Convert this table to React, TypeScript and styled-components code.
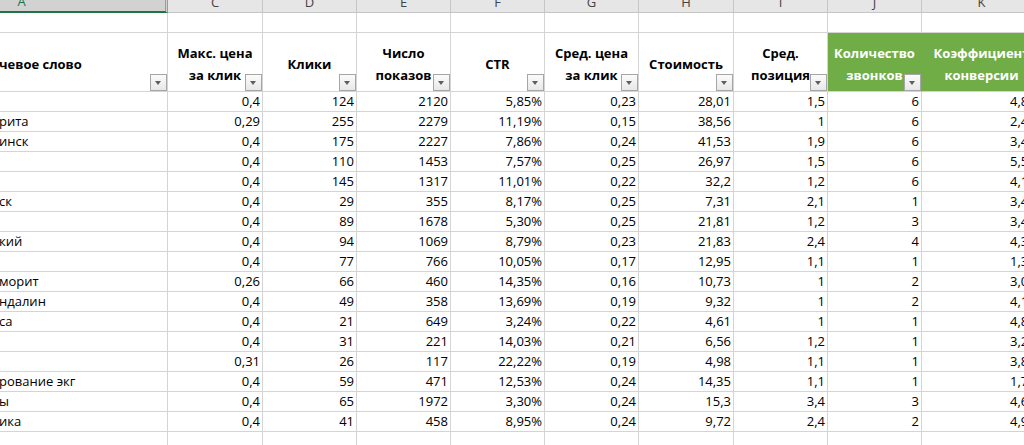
import React from 'react';
import styled, { createGlobalStyle } from 'styled-components';

const GRID = '#d4d4d4';
const GREEN = '#70ad47';

const GlobalStyle = createGlobalStyle`
  html, body { margin: 0; padding: 0; background: #fff; overflow: hidden; }
  body { font-family: 'Open Sans', 'Noto Sans', sans-serif; }
`;

const Viewport = styled.div`
  width: 1024px;
  height: 445px;
  overflow: hidden;
  background: #fff;
`;

const Sheet = styled.div`
  display: grid;
  grid-template-columns: 290px 95px 94px 94px 94px 94px 95px 94px 94px 120px;
  grid-template-rows: 21px 20px 59px;
  grid-auto-rows: 20px;
  width: max-content;
  margin-left: -122px;
  margin-top: -8px;
  font-family: 'Open Sans', 'Noto Sans', sans-serif;
  font-size: 13px;
  color: #000;
`;

const ColHead = styled.div<{ $selected?: boolean }>`
  box-sizing: border-box;
  display: flex;
  align-items: center;
  justify-content: center;
  padding-bottom: 1px;
  background: ${(p) => (p.$selected ? '#d2d2d2' : '#e6e6e6')};
  border-right: ${(p) => (p.$selected ? '3px double #9a9a9a' : '1px solid #c6c6c6')};
  border-bottom: ${(p) => (p.$selected ? '2px solid #217346' : '1px solid #c6c6c6')};
  color: ${(p) => (p.$selected ? '#217346' : '#444')};
  font-size: 13px;
`;

const Cell = styled.div<{ $align?: 'left' | 'right' }>`
  box-sizing: border-box;
  border-right: 1px solid ${GRID};
  border-bottom: 1px solid ${GRID};
  line-height: 19px;
  padding: 0 2px;
  white-space: nowrap;
  overflow: hidden;
  text-align: ${(p) => p.$align ?? 'right'};
`;

const KeyCell = styled(Cell)`
  padding-left: 121px;
  text-align: left;
`;

const HeadCell = styled.div<{ $green?: boolean; $left?: boolean }>`
  position: relative;
  box-sizing: border-box;
  display: flex;
  flex-direction: column;
  justify-content: center;
  align-items: ${(p) => (p.$left ? 'flex-start' : 'center')};
  padding: 3px 0 0 ${(p) => (p.$left ? '121px' : '0')};
  border-bottom: 1px solid ${GRID};
  border-right: 1px solid ${(p) => (p.$green ? GREEN : GRID)};
  background: ${(p) => (p.$green ? GREEN : '#fff')};
  color: ${(p) => (p.$green ? '#fff' : '#000')};
  font-weight: 700;
  line-height: 22px;
  white-space: nowrap;
  overflow: hidden;
`;

const HeadLine = styled.span`
  display: block;
`;

const FilterButton = styled.span`
  position: absolute;
  right: 0;
  bottom: 0;
  width: 17px;
  height: 17px;
  box-sizing: border-box;
  border: 1px solid #a6a6a6;
  background: linear-gradient(#fbfbfb, #e8e8e8);
  &::after {
    content: '';
    position: absolute;
    left: 4px;
    top: 6px;
    border-left: 3.5px solid transparent;
    border-right: 3.5px solid transparent;
    border-top: 4px solid #5e5e5e;
  }
`;

const letters = ['A', 'C', 'D', 'E', 'F', 'G', 'H', 'I', 'J', 'K'];

type Header = { lines: string[]; green?: boolean; left?: boolean };

const headers: Header[] = [
  { lines: ['чевое слово'], left: true },
  { lines: ['Макс. цена', 'за клик'] },
  { lines: ['Клики'] },
  { lines: ['Число', 'показов'] },
  { lines: ['CTR'] },
  { lines: ['Сред. цена', 'за клик'] },
  { lines: ['Стоимость'] },
  { lines: ['Сред.', 'позиция'] },
  { lines: ['Количество', 'звонков'], green: true },
  { lines: ['Коэффициент', 'конверсии'], green: true },
];

const rows: string[][] = [
  ['', '0,4', '124', '2120', '5,85%', '0,23', '28,01', '1,5', '6', '4,8%'],
  ['рита', '0,29', '255', '2279', '11,19%', '0,15', '38,56', '1', '6', '2,4%'],
  ['инск', '0,4', '175', '2227', '7,86%', '0,24', '41,53', '1,9', '6', '3,4%'],
  ['', '0,4', '110', '1453', '7,57%', '0,25', '26,97', '1,5', '6', '5,5%'],
  ['', '0,4', '145', '1317', '11,01%', '0,22', '32,2', '1,2', '6', '4,1%'],
  ['ск', '0,4', '29', '355', '8,17%', '0,25', '7,31', '2,1', '1', '3,4%'],
  ['', '0,4', '89', '1678', '5,30%', '0,25', '21,81', '1,2', '3', '3,4%'],
  ['кий', '0,4', '94', '1069', '8,79%', '0,23', '21,83', '2,4', '4', '4,3%'],
  ['', '0,4', '77', '766', '10,05%', '0,17', '12,95', '1,1', '1', '1,3%'],
  ['морит', '0,26', '66', '460', '14,35%', '0,16', '10,73', '1', '2', '3,0%'],
  ['ндалин', '0,4', '49', '358', '13,69%', '0,19', '9,32', '1', '2', '4,1%'],
  ['са', '0,4', '21', '649', '3,24%', '0,22', '4,61', '1', '1', '4,8%'],
  ['', '0,4', '31', '221', '14,03%', '0,21', '6,56', '1,2', '1', '3,2%'],
  ['', '0,31', '26', '117', '22,22%', '0,19', '4,98', '1,1', '1', '3,8%'],
  ['рование экг', '0,4', '59', '471', '12,53%', '0,24', '14,35', '1,1', '1', '1,7%'],
  ['ы', '0,4', '65', '1972', '3,30%', '0,24', '15,3', '3,4', '3', '4,6%'],
  ['ика', '0,4', '41', '458', '8,95%', '0,24', '9,72', '2,4', '2', '4,9%'],
  ['', '', '', '', '', '', '', '', '', ''],
];

const renderRow = (cells: string[], r: number) =>
  cells.map((v, c) =>
    c === 0 ? (
      <KeyCell key={`${r}-${c}`}>{v}</KeyCell>
    ) : (
      <Cell key={`${r}-${c}`}>{v}</Cell>
    )
  );

export default function App() {
  return (
    <>
      <GlobalStyle />
      <Viewport>
        <Sheet>
          {letters.map((l, i) => (
            <ColHead key={l} $selected={i === 0}>
              {l}
            </ColHead>
          ))}
          {renderRow(['', '', '', '', '', '', '', '', '', ''], -1)}
          {headers.map((h, i) => (
            <HeadCell key={i} $green={h.green} $left={h.left}>
              {h.lines.map((t) => (
                <HeadLine key={t}>{t}</HeadLine>
              ))}
              <FilterButton />
            </HeadCell>
          ))}
          {rows.map((r, i) => renderRow(r, i))}
        </Sheet>
      </Viewport>
    </>
  );
}
